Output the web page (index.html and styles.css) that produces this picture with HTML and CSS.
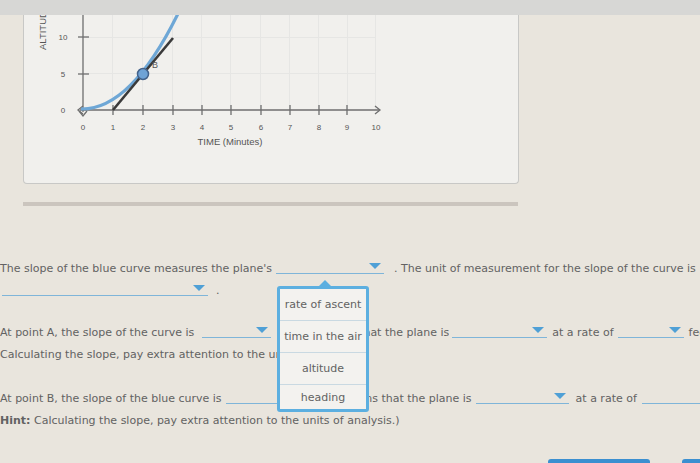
FILE: index.html
```html
<!DOCTYPE html>
<html>
<head>
<meta charset="utf-8">
<link rel="stylesheet" href="styles.css">
</head>
<body>
<div class="topbar"></div>
<div class="graph">
  <svg class="plot" width="495" height="168" viewBox="23 15 495 168" xmlns="http://www.w3.org/2000/svg">
    <g stroke="#e6e6e4" stroke-width="1">
      <line x1="111.5" y1="15" x2="111.5" y2="110"/>
      <line x1="141.5" y1="15" x2="141.5" y2="110"/>
      <line x1="171.5" y1="15" x2="171.5" y2="110"/>
      <line x1="200.5" y1="15" x2="200.5" y2="110"/>
      <line x1="229.5" y1="15" x2="229.5" y2="110"/>
      <line x1="259.5" y1="15" x2="259.5" y2="110"/>
      <line x1="288.5" y1="15" x2="288.5" y2="110"/>
      <line x1="317.5" y1="15" x2="317.5" y2="110"/>
      <line x1="346.5" y1="15" x2="346.5" y2="110"/>
      <line x1="374.5" y1="15" x2="374.5" y2="110"/>
      <line x1="82" y1="37.5" x2="375" y2="37.5"/>
      <line x1="82" y1="73.5" x2="375" y2="73.5"/>
    </g>
    <g stroke="#6e6e6e" stroke-width="1.3" fill="none">
      <line x1="82" y1="15" x2="82" y2="112"/>
      <line x1="79" y1="110" x2="378" y2="110"/>
      <line x1="77" y1="37" x2="88" y2="37"/>
      <line x1="77" y1="74" x2="88" y2="74"/>
      <line x1="112" y1="105" x2="112" y2="115"/>
      <line x1="142" y1="105" x2="142" y2="115"/>
      <line x1="172" y1="105" x2="172" y2="115"/>
      <line x1="201" y1="105" x2="201" y2="115"/>
      <line x1="230" y1="105" x2="230" y2="115"/>
      <line x1="260" y1="105" x2="260" y2="115"/>
      <line x1="289" y1="105" x2="289" y2="115"/>
      <line x1="318" y1="105" x2="318" y2="115"/>
      <line x1="346" y1="105" x2="346" y2="115"/>
      <polyline points="82,106 77,110 82,114"/>
      <polyline points="78,111 82,116 86,111"/>
      <polyline points="374,106 379,110 374,114"/>
    </g>
    <g font-family="Liberation Sans, Arial, sans-serif" font-size="8" fill="#555" text-anchor="middle">
      <text x="62" y="40">10</text>
      <text x="62" y="77">5</text>
      <text x="62" y="113">0</text>
      <text x="82" y="130">0</text>
      <text x="112" y="130">1</text>
      <text x="142" y="130">2</text>
      <text x="172" y="130">3</text>
      <text x="201" y="130">4</text>
      <text x="230" y="130">5</text>
      <text x="260" y="130">6</text>
      <text x="289" y="130">7</text>
      <text x="318" y="130">8</text>
      <text x="346" y="130">9</text>
      <text x="375" y="130">10</text>
      <text x="229" y="145" font-size="9.5">TIME (Minutes)</text>
      <text x="0" y="0" font-size="9.5" text-anchor="start" transform="translate(45 50) rotate(-90)">ALTITUDE</text>
    </g>
    <path d="M80 109 Q130.4 110 178.7 10.2" stroke="#6ea7d6" stroke-width="3.2" fill="none"/>
    <line x1="112" y1="110" x2="172" y2="38" stroke="#3a3a3a" stroke-width="2.6"/>
    <circle cx="142" cy="74" r="5.5" fill="#6fa3d6" stroke="#44628a" stroke-width="1.5"/>
    <text x="151" y="68" font-family="Liberation Sans, Arial, sans-serif" font-size="9" fill="#555">B</text>
  </svg>
</div>
<div class="rule"></div>

<div class="question">
  <div class="row">
    <span class="t">The slope of the blue curve measures the plane's</span>
    <span class="dd w108 ml4"><i class="arr"></i></span>
    <span class="t ml10">. The unit of measurement for the slope of the curve is</span>
  </div>
  <div class="row">
    <span class="dd w206 ml2"><i class="arr"></i></span>
    <span class="t ml8">.</span>
  </div>

  <div class="row gap1">
    <span class="t">At point A, the slope of the curve is</span>
    <span class="dd w69 ml8"><i class="arr"></i></span>
    <span class="under w178"><span>. This means that the plane is</span></span>
    <span class="dd w95 ml3"><i class="arr"></i></span>
    <span class="t ml5">at a rate of</span>
    <span class="dd w66 ml4"><i class="arr"></i></span>
    <span class="t ml5">feet per minute.</span>
  </div>
  <div class="row">
    <span class="t clip360">Calculating the slope, pay extra attention to the units of analysis.)</span>
  </div>

  <div class="row gap2">
    <span class="t">At point B, the slope of the blue curve is</span>
    <span class="dd w70 ml4"><i class="arr"></i></span>
    <span class="under w176"><span>. This means that the plane is</span></span>
    <span class="dd w93 ml4"><i class="arr"></i></span>
    <span class="t ml7">at a rate of</span>
    <span class="dd w80 ml5"><i class="arr"></i></span>
  </div>
  <div class="row">
    <span class="t"><b>Hint:</b> Calculating the slope, pay extra attention to the units of analysis.)</span>
  </div>

  <div class="popup">
    <div class="opt">rate of ascent</div>
    <div class="opt">time in the air</div>
    <div class="opt">altitude</div>
    <div class="opt last">heading</div>
  </div>
</div>

<div class="actions">
  <span class="btn wide"></span>
  <span class="btn narrow"></span>
</div>
</body>
</html>
```
FILE: styles.css
```css
html, body {
  margin: 0;
  padding: 0;
}
body {
  width: 700px;
  height: 463px;
  overflow: hidden;
  background: #e9e5dd;
  font-family: "DejaVu Sans", Verdana, sans-serif;
  font-size: 11px;
  color: #626262;
}
.topbar {
  height: 15px;
  background: #d7d7d5;
}
.graph {
  margin-left: 23px;
  width: 494px;
  height: 168px;
  border: 1px solid #c8c8c6;
  border-top: none;
  border-radius: 0 0 4px 4px;
  background: #f1f0ed;
}
.plot {
  display: block;
}
.rule {
  margin-left: 23px;
  width: 495px;
  height: 4px;
  margin-top: 18px;
  background: #cbc5be;
}
.question {
  position: relative;
  margin-top: 51px;
}
.row {
  display: flex;
  align-items: center;
  height: 22px;
  white-space: nowrap;
}
.gap1 { margin-top: 20px; }
.gap2 { margin-top: 22px; }
.t {
  flex: none;
}
.dd {
  flex: none;
  height: 12px;
  border-bottom: 1px solid #7fb5d9;
  display: flex;
  justify-content: flex-end;
  align-items: center;
  padding-right: 3px;
  box-sizing: border-box;
}
.arr {
  width: 0;
  height: 0;
  border-left: 6px solid transparent;
  border-right: 6px solid transparent;
  border-top: 6px solid #4fa0d6;
  margin-top: -4px;
}
.under {
  flex: none;
  display: flex;
  justify-content: flex-end;
  overflow: hidden;
}
.under > span {
  flex: none;
}
.clip360 {
  width: 360px;
  overflow: hidden;
}
.w66 { width: 66px; }
.w69 { width: 69px; }
.w70 { width: 70px; }
.w80 { width: 80px; }
.w93 { width: 93px; }
.w95 { width: 95px; }
.w108 { width: 108px; }
.w176 { width: 176px; }
.w178 { width: 178px; }
.w206 { width: 206px; }
.ml2 { margin-left: 2px; }
.ml3 { margin-left: 3px; }
.ml4 { margin-left: 4px; }
.ml5 { margin-left: 5px; }
.ml7 { margin-left: 7px; }
.ml8 { margin-left: 8px; }
.ml10 { margin-left: 10px; }
.popup {
  position: absolute;
  left: 277px;
  top: 29px;
  width: 92px;
  height: 126px;
  box-sizing: border-box;
  border: 3px solid #5cafe0;
  border-radius: 3px;
  background: #f3f2ef;
  display: flex;
  flex-direction: column;
}
.popup::before {
  content: "";
  position: absolute;
  left: 39px;
  top: -9px;
  border-left: 6px solid transparent;
  border-right: 6px solid transparent;
  border-bottom: 6px solid #5cafe0;
}
.opt {
  height: 31px;
  flex: none;
  border-bottom: 1px solid #c9d9e2;
  display: flex;
  align-items: center;
  justify-content: center;
  white-space: nowrap;
}
.opt.last {
  flex: 1;
  border-bottom: none;
}
.actions {
  display: flex;
  gap: 32px;
  padding-left: 548px;
  margin-top: 28px;
}
.btn {
  flex: none;
  height: 10px;
  background: #3b8fd0;
  border-radius: 3px 3px 0 0;
}
.wide { width: 102px; }
.narrow { width: 30px; }
```
